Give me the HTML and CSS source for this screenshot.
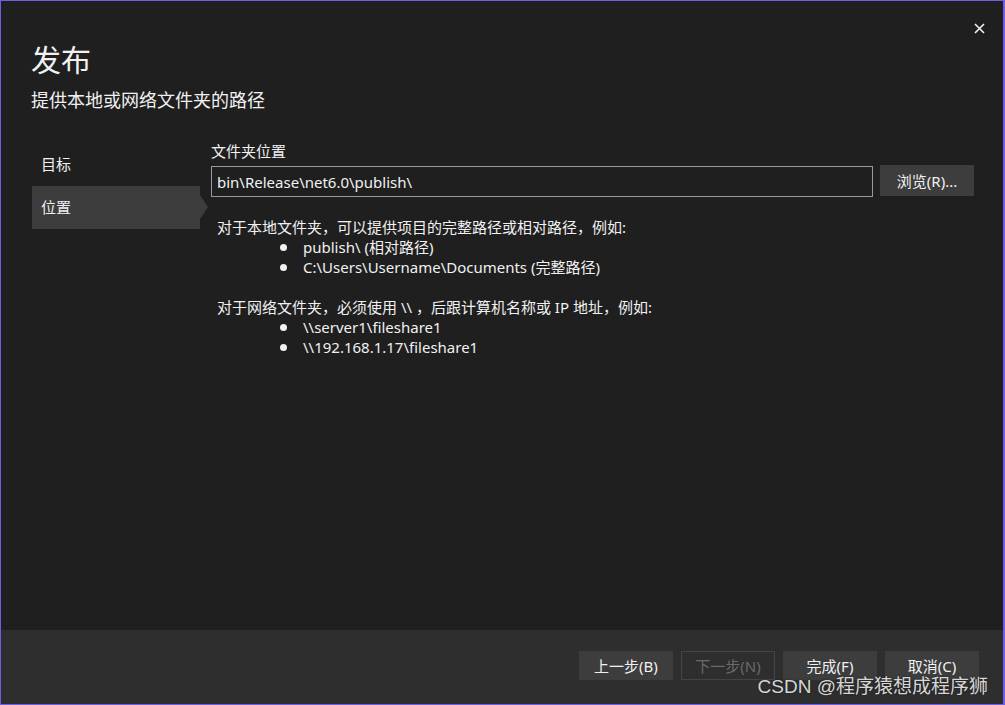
FILE: index.html
```html
<!DOCTYPE html>
<html lang="zh-CN">

<head>
  <meta charset="UTF-8">
  <title>发布</title>
  <link rel="stylesheet" href="styles.css">
</head>
<body>
  <div class="window">
    <button class="close-btn" title="关闭">
      <svg width="11" height="11" viewBox="0 0 11 11">
        <path d="M1 1 L10 10 M10 1 L1 10" stroke="#f1f1f1" stroke-width="1.6" fill="none" />
      </svg>
    </button>

    <div class="header">
      <h1>发布</h1>
      <p class="subtitle">提供本地或网络文件夹的路径</p>
    </div>

    <div class="main">
      <!-- Steps -->
      <ul class="steps">
        <li>目标</li>
        <li class="active">位置</li>
      </ul>

      <!-- Folder location -->
      <div class="content">
        <label class="field-label" for="folderPath">文件夹位置</label>
        <div class="path-row">
          <input type="text" id="folderPath" value="bin\Release\net6.0\publish\">
          <button class="btn">浏览(R)...</button>
        </div>

        <div class="help">
          <p>对于本地文件夹，可以提供项目的完整路径或相对路径，例如:</p>
          <ul>
            <li>publish\ (相对路径)</li>
            <li>C:\Users\Username\Documents (完整路径)</li>
          </ul>
          <p class="gap">对于网络文件夹，必须使用 \\ ，后跟计算机名称或 IP 地址，例如:</p>
          <ul>
            <li>\\server1\fileshare1</li>
            <li>\\192.168.1.17\fileshare1</li>
          </ul>
        </div>
      </div>
    </div>

    <div class="footer">
      <button class="btn">上一步(B)</button>
      <button class="btn" disabled>下一步(N)</button>
      <button class="btn">完成(F)</button>
      <button class="btn">取消(C)</button>
    </div>

    <div class="watermark">CSDN @程序猿想成程序狮</div>
  </div>
</body>

</html>
```

FILE: styles.css
```css
* {
  box-sizing: border-box;
}

body {
  margin: 0;
  background: #1f1f1f;
  color: #f1f1f1;
  font-family: "Noto Sans", "Noto Sans CJK SC", sans-serif;
  font-size: 15px;
}

/* Dialog window */
.window {
  position: relative;
  width: 1005px;
  height: 705px;
  border: 1px solid #6b5fe3;
  border-right-width: 2px;
  background: #1f1f1f;
  display: flex;
  flex-direction: column;
}

.close-btn {
  position: absolute;
  top: 20px;
  right: 17px;
  width: 14px;
  height: 14px;
  padding: 0;
  border: none;
  background: transparent;
  display: flex;
  align-items: center;
  justify-content: center;
  cursor: pointer;
}

/* Heading */
.header {
  padding: 37px 0 0 30px;
}

.header h1 {
  margin: 0;
  font-size: 30px;
  font-weight: normal;
  line-height: 44px;
}

.subtitle {
  margin: 5px 0 0;
  font-size: 18px;
  line-height: 26px;
}

/* Body */
.main {
  flex: 1;
  display: flex;
  padding-left: 31px;
}

.steps {
  list-style: none;
  margin: 30px 0 0;
  padding: 0;
  width: 168px;
}

.steps li {
  position: relative;
  height: 43px;
  line-height: 43px;
  padding-left: 9px;
}

.steps li.active {
  background: #3d3d3d;
}

.steps li.active::after {
  content: "";
  position: absolute;
  left: 100%;
  top: 9px;
  border-top: 12px solid transparent;
  border-bottom: 12px solid transparent;
  border-left: 8px solid #3d3d3d;
}

.content {
  margin: 28px 0 0 11px;
  width: 763px;
}

.field-label {
  display: block;
  line-height: 20px;
}

.path-row {
  display: flex;
  align-items: flex-start;
  gap: 7px;
  margin-top: 4px;
}

.path-row input {
  flex: 1;
  height: 31px;
  margin-top: 1px;
  padding: 0 5px;
  border: 1px solid #999;
  background: #1f1f1f;
  color: #f1f1f1;
  font-family: inherit;
  font-size: 15px;
  outline: none;
}

.btn {
  width: 94px;
  height: 31px;
  padding: 0;
  border: 1px solid #3d3d3d;
  background: #3d3d3d;
  color: #f1f1f1;
  font-family: inherit;
  font-size: 15px;
  cursor: pointer;
}

.btn:disabled {
  background: transparent;
  border-color: #444;
  color: #6a6a6a;
  cursor: default;
}

/* Help text */
.help {
  margin-top: 20px;
  padding-left: 6px;
  line-height: 20px;
}

.help p {
  margin: 0;
}

.help p.gap {
  margin-top: 20px;
}

.help ul {
  margin: 0;
  padding-left: 86px;
  list-style: none;
}

.help ul li::before {
  content: "";
  display: inline-block;
  width: 7px;
  height: 7px;
  margin: 0 16px 2px -23px;
  border-radius: 50%;
  background: #f1f1f1;
}

/* Footer */
.footer {
  height: 74px;
  background: #2e2e2e;
  display: flex;
  justify-content: flex-end;
  align-items: flex-start;
  gap: 8px;
  padding: 21px 24px 0 0;
}

.footer .btn {
  height: 29px;
}

.watermark {
  position: absolute;
  right: 15px;
  bottom: 6px;
  font-family: "Liberation Sans", "Noto Sans CJK SC", sans-serif;
  font-size: 19px;
  color: #d6d6d6;
  text-shadow: 0 0 2px #1a1a1a;
  pointer-events: none;
}
```
